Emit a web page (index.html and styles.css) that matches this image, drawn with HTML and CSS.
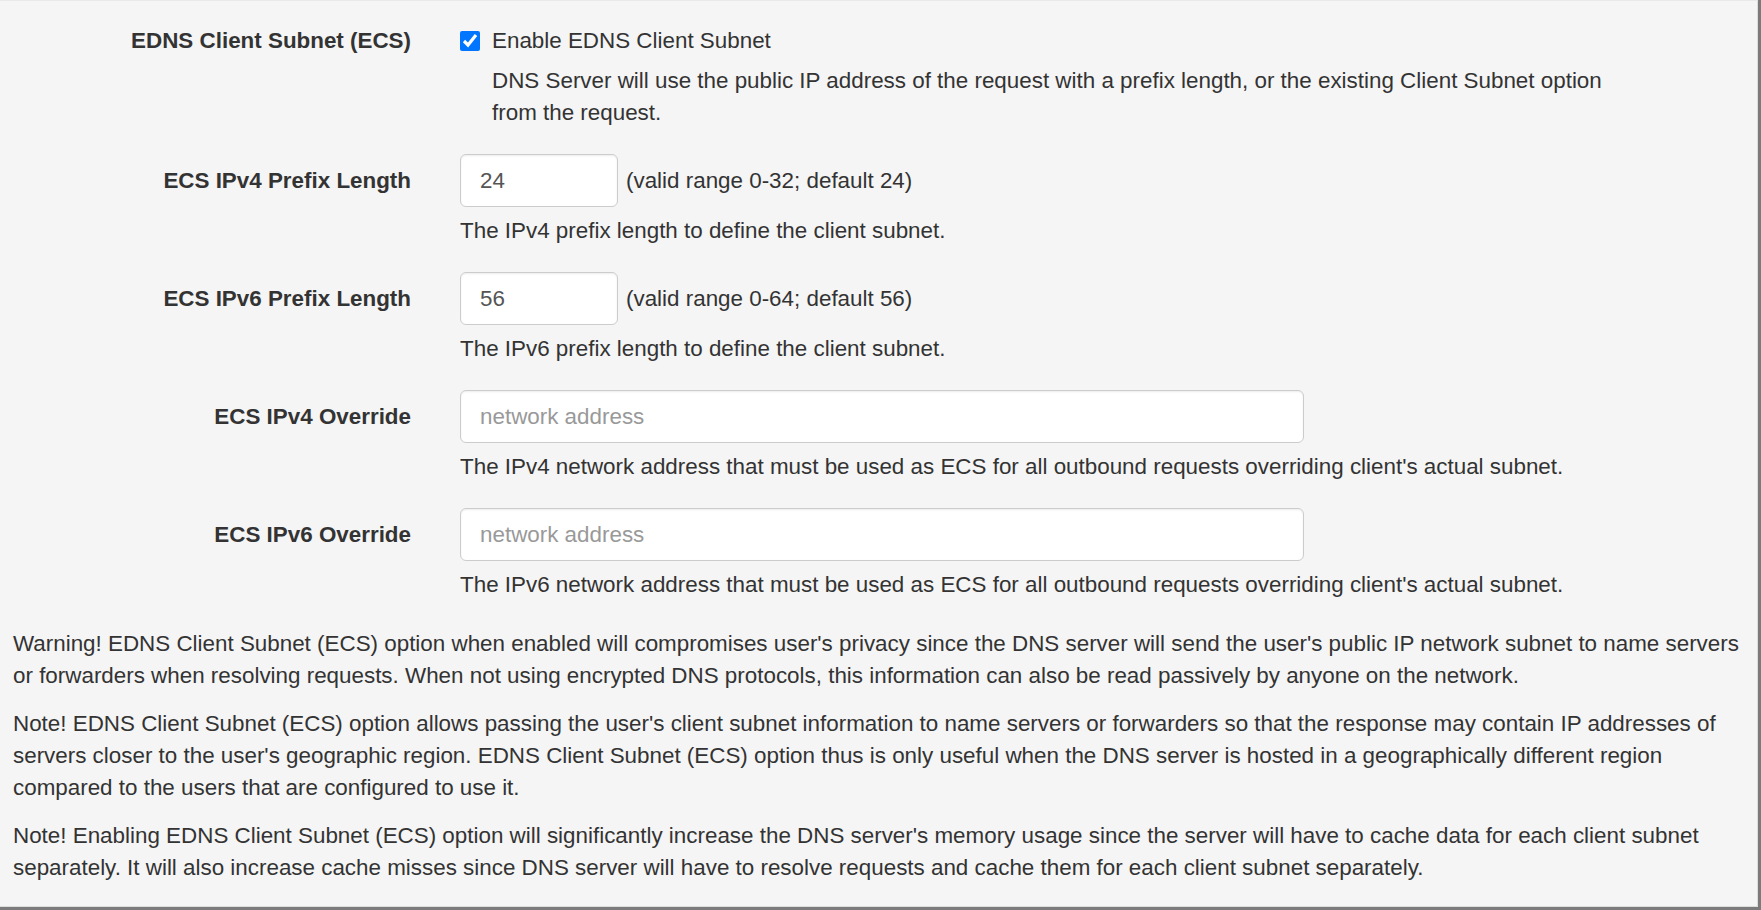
FILE: index.html
```html
<!DOCTYPE html>
<html lang="en">
<head>
<meta charset="utf-8">
<title>EDNS Client Subnet</title>
<link rel="stylesheet" href="styles.css">
</head>
<body>
<div class="frame">
  <div class="panel">
    <div class="form-row">
      <label class="form-label">EDNS Client Subnet (ECS)</label>
      <div class="form-field">
        <label class="check">
          <input type="checkbox" class="check-box" checked>
          <span>Enable EDNS Client Subnet</span>
        </label>
        <p class="help help-indent">DNS Server will use the public IP address of the request with a prefix length, or the existing Client Subnet option from the request.</p>
      </div>
    </div>

    <div class="form-row">
      <label class="form-label label-input">ECS IPv4 Prefix Length</label>
      <div class="form-field">
        <div class="inline">
          <input type="text" class="input input-small" value="24">
          <span class="hint">(valid range 0-32; default 24)</span>
        </div>
        <p class="help">The IPv4 prefix length to define the client subnet.</p>
      </div>
    </div>

    <div class="form-row">
      <label class="form-label label-input">ECS IPv6 Prefix Length</label>
      <div class="form-field">
        <div class="inline">
          <input type="text" class="input input-small" value="56">
          <span class="hint">(valid range 0-64; default 56)</span>
        </div>
        <p class="help">The IPv6 prefix length to define the client subnet.</p>
      </div>
    </div>

    <div class="form-row">
      <label class="form-label label-input">ECS IPv4 Override</label>
      <div class="form-field">
        <input type="text" class="input input-wide" placeholder="network address">
        <p class="help">The IPv4 network address that must be used as ECS for all outbound requests overriding client's actual subnet.</p>
      </div>
    </div>

    <div class="form-row">
      <label class="form-label label-input">ECS IPv6 Override</label>
      <div class="form-field">
        <input type="text" class="input input-wide" placeholder="network address">
        <p class="help">The IPv6 network address that must be used as ECS for all outbound requests overriding client's actual subnet.</p>
      </div>
    </div>

    <div class="notes">
      <p>Warning! EDNS Client Subnet (ECS) option when enabled will compromises user's privacy since the DNS server will send the user's public IP network subnet to name servers or forwarders when resolving requests. When not using encrypted DNS protocols, this information can also be read passively by anyone on the network.</p>
      <p>Note! EDNS Client Subnet (ECS) option allows passing the user's client subnet information to name servers or forwarders so that the response may contain IP addresses of servers closer to the user's geographic region. EDNS Client Subnet (ECS) option thus is only useful when the DNS server is hosted in a geographically different region compared to the users that are configured to use it.</p>
      <p>Note! Enabling EDNS Client Subnet (ECS) option will significantly increase the DNS server's memory usage since the server will have to cache data for each client subnet separately. It will also increase cache misses since DNS server will have to resolve requests and cache them for each client subnet separately.</p>
    </div>
  </div>
</div>
</body>
</html>
```

FILE: styles.css
```css
* {
  box-sizing: border-box;
}

html, body {
  margin: 0;
  padding: 0;
}

body {
  font-family: "Liberation Sans", Arial, Helvetica, sans-serif;
  font-size: 22.4px;
  line-height: 32px;
  color: #333333;
  background: #f5f5f5;
}

.frame {
  width: 1761px;
  height: 910px;
  border-right: 3px solid #7b7b7b;
  border-bottom: 3px solid #7b7b7b;
  overflow: hidden;
}

.panel {
  height: 100%;
  background: #f5f5f5;
  border-top: 1px solid #e9e9e9;
  border-right: 1px solid #dddddd;
  border-bottom: 1px solid #dddddd;
  padding: 24px 12px 0 13px;
}

.form-row {
  display: grid;
  grid-template-columns: 398px 1160px;
  column-gap: 49px;
  margin-bottom: 25px;
}

.form-label {
  text-align: right;
  font-weight: bold;
  line-height: 32px;
}

.label-input {
  padding-top: 11px;
}

.form-field {
  min-width: 0;
}

.check {
  display: flex;
  align-items: center;
  height: 32px;
}

.check-box {
  width: 20px;
  height: 20px;
  margin: 0 12px 0 0;
  accent-color: #0075ff;
}

.help {
  margin: 8px 0 0 0;
}

.help-indent {
  padding-left: 32px;
}

.inline {
  display: flex;
  align-items: center;
}

.hint {
  margin-left: 8px;
}

.input {
  display: block;
  height: 53px;
  padding: 0 19px;
  font-family: "Liberation Sans", Arial, Helvetica, sans-serif;
  font-size: 22.4px;
  color: #555555;
  background: #ffffff;
  border: 1px solid #cccccc;
  border-radius: 6px;
  box-shadow: inset 0 1px 2px rgba(0, 0, 0, 0.075);
  outline: none;
}

.input::placeholder {
  color: #999999;
}

.input-small {
  width: 158px;
}

.input-wide {
  width: 844px;
}

.notes {
  padding-top: 2px;
}

.notes p {
  margin: 0 0 16px 0;
}
```
